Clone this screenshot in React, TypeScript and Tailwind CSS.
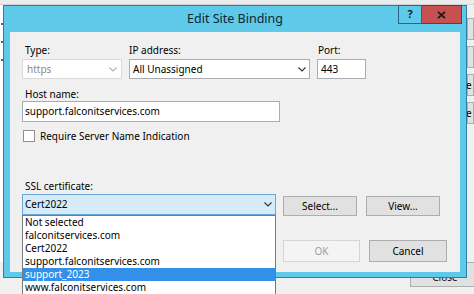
import React from 'react'

const items = [
  'Not selected',
  'falconitservices.com',
  'Cert2022',
  'support.falconitservices.com',
  'support_2023',
  'www.falconitservices.com',
]

function Chevron({ color = '#333' }: { color?: string }) {
  return (
    <svg width="8" height="5" viewBox="0 0 8 5">
      <polyline points="0.5,0.5 4,4 7.5,0.5" fill="none" stroke={color} strokeWidth="1.1" />
    </svg>
  )
}

function Label({ children, className = '' }: { children: React.ReactNode; className?: string }) {
  return <div className={`h-[13px] leading-[13px] whitespace-nowrap ${className}`}>{children}</div>
}

function Button({ children, className = '', disabled = false }: { children: React.ReactNode; className?: string; disabled?: boolean }) {
  return (
    <div
      className={`flex items-center justify-center border ${
        disabled ? 'bg-[#f4f4f4] border-[#d5d5d5] text-[#a0a0a0]' : 'bg-[#e1e1e1] border-[#adadad] text-[#000]'
      } ${className}`}
    >
      {children}
    </div>
  )
}

function Backdrop() {
  // the Site Bindings window behind the dialog
  return (
    <>
      <div className="absolute left-0 top-0 w-[474px] h-[5px] bg-[#e9ebec] border-b border-[#d2d2d2]" />
      <div className="absolute left-0 top-[5px] w-[3px] h-[257px] bg-white flex flex-col gap-[16px] pt-[18px]">
        <div className="h-[2px] w-[2px] ml-[1px] bg-[#3b6ea5]" />
        <div className="h-[2px] w-[2px] ml-[1px] bg-[#3b6ea5]" />
        <div className="h-[2px] w-[2px] ml-[1px] bg-[#3b6ea5]" />
      </div>
      <div className="absolute left-[467px] top-[5px] w-[7px] h-[289px] bg-[#f0f0f0] flex flex-col gap-[6px] pt-[13px]">
        <div className="h-[22px] border border-[#adadad] bg-[#e1e1e1]" />
        <div className="h-[22px] border border-[#adadad] bg-[#e1e1e1]" />
        <div className="h-[22px] border border-[#adadad] bg-[#e1e1e1] text-[10px] leading-[20px] -indent-[2px]">e</div>
        <div className="h-[22px] border border-[#adadad] bg-[#e1e1e1] text-[10px] leading-[20px] -indent-[2px]">e</div>
      </div>
      <div className="absolute left-[410px] top-[262px] w-[70px] h-[25px] border border-[#adadad] bg-[#e1e1e1] flex items-center justify-center pt-[5px] text-[10px] leading-[12px] text-[#111]">
        Close
      </div>
    </>
  )
}

function Cursor() {
  return (
    <svg className="absolute left-[226px] top-[273px]" width="12" height="19" viewBox="0 0 12 19">
      <path
        d="M0.5 0.5 L0.5 15.5 L4 12.2 L6.4 17.8 L8.6 16.8 L6.3 11.4 L10.8 11.4 Z"
        fill="#fff"
        stroke="#000"
        strokeWidth="1"
        strokeLinejoin="round"
      />
    </svg>
  )
}

export default function App() {
  return (
    <div className="relative w-[474px] h-[294px] overflow-hidden bg-[#f0f0f0] font-['Noto_Sans',sans-serif] text-[10px] text-[#000]">
      <Backdrop />

      <div className="absolute left-[3px] top-[5px] w-[464px] h-[273px] border border-[#2d7fa1] bg-[#5fc9ea] flex flex-col px-[6px] pb-[5px]">
        <div className="relative h-[26px] flex items-center justify-center">
          <span className="text-[12.5px] text-[#0f2634]">Edit Site Binding</span>
          <div className="absolute right-[-2px] top-[-1px] flex">
            <div className="w-[24px] h-[19px] border border-[#2a6680] flex items-center justify-center text-[11px] font-bold text-[#122]">
              ?
            </div>
            <div className="w-[40px] h-[19px] border border-l-0 border-[#7a3330] bg-[#c75050] flex items-center justify-center">
              <svg width="9" height="8" viewBox="0 0 9 8">
                <path d="M1 0.8 L8 7.2 M8 0.8 L1 7.2" stroke="#1a1a1a" strokeWidth="1.8" />
              </svg>
            </div>
          </div>
        </div>

        <div className="flex-1 bg-[#f0f0f0] pl-[12px] pt-[12px] flex flex-col">
          <div className="flex gap-[7px]">
            <div className="flex flex-col w-[100px]">
              <Label className="ml-[3px]">Type:</Label>
              <div className="mt-[2px] h-[20px] bg-white border border-[#d9d9d9] flex items-center justify-between pl-[4px] pr-[4px] text-[#8a8a8a]">
                <span>https</span>
                <Chevron color="#b0b0b0" />
              </div>
            </div>
            <div className="flex flex-col w-[181px]">
              <Label>IP address:</Label>
              <div className="mt-[2px] h-[20px] bg-white border border-[#abadb3] flex items-center justify-between pl-[3px] pr-[3px]">
                <span>All Unassigned</span>
                <Chevron />
              </div>
            </div>
            <div className="flex flex-col w-[49px]">
              <Label className="ml-[1px]">Port:</Label>
              <div className="mt-[2px] h-[20px] bg-white border border-[#abadb3] flex items-center pl-[3px]">443</div>
            </div>
          </div>

          <Label className="mt-[9px] ml-[3px]">Host name:</Label>
          <div className="w-[258px] h-[21px] bg-white border border-[#abadb3] flex items-center pl-[2px]">
            support.falconitservices.com
          </div>

          <div className="mt-[8px] h-[12px] flex items-center">
            <div className="ml-[1px] w-[12px] h-[12px] bg-white border border-[#8e8f8f]" />
            <span className="ml-[5px] leading-[12px]">Require Server Name Indication</span>
          </div>

          <Label className="mt-[38px] ml-[3px]">SSL certificate:</Label>
          <div className="mt-[1px] flex items-start">
            <div className="relative w-[254px] h-[21px] bg-[#d6ebf8] border border-[#6aa6d6] flex items-center justify-between pl-[2px] pr-[3px]">
              <span>Cert2022</span>
              <Chevron />
              <div className="absolute z-10 left-[-1px] top-[20px] w-[254px] bg-white border border-[#7a7a7a]">
                {items.map((it) => (
                  <div
                    key={it}
                    className={`h-[13px] leading-[13px] pl-[2px] whitespace-nowrap ${
                      it === 'support_2023' ? 'bg-[#3390e8] text-white' : ''
                    }`}
                  >
                    {it}
                  </div>
                ))}
              </div>
            </div>
            <Button className="ml-[7px] mt-[2px] w-[74px] h-[20px]">Select...</Button>
            <Button className="ml-[9px] mt-[2px] w-[74px] h-[20px]">View...</Button>
          </div>

          <div className="mt-[24px] flex">
            <Button disabled className="ml-[261px] w-[77px] h-[22px]">
              OK
            </Button>
            <Button className="ml-[9px] w-[78px] h-[22px] border-[#8a8a8a]">Cancel</Button>
          </div>
        </div>
      </div>

      <Cursor />
    </div>
  )
}
